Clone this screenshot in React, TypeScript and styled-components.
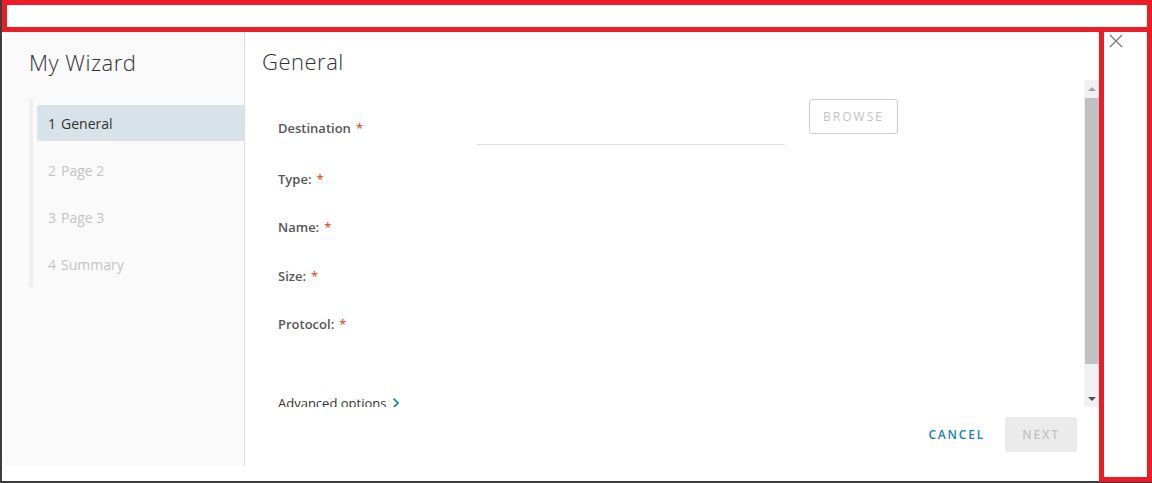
import styled, { createGlobalStyle } from 'styled-components'

const GlobalStyle = createGlobalStyle`
  html, body {
    margin: 0;
    padding: 0;
    background: #3d3d3d;
    font-family: 'Open Sans', 'Liberation Sans', sans-serif;
  }
  * { box-sizing: border-box; }
`

const Stage = styled.div`
  position: relative;
  width: 1152px;
  height: 483px;
  overflow: hidden;
  background: #3d3d3d;
`

const Modal = styled.div`
  display: flex;
  margin-left: 2px;
  width: 1150px;
  height: 481px;
  padding-left: 3px;
  background: #fff;
`

const Sidebar = styled.aside`
  width: 240px;
  height: 466px;
  flex-shrink: 0;
  padding: 48px 0 0 24px;
  background: #fafafa;
  border-right: 1px solid #dddddd;
  border-bottom-left-radius: 4px;
`

const Title = styled.h1`
  margin: 0;
  font-size: 22px;
  line-height: 28px;
  font-weight: 300;
  letter-spacing: 0.5px;
  color: #313131;
`

const StepNav = styled.nav`
  display: flex;
  flex-direction: column;
  gap: 11px;
  margin-top: 23px;
  padding: 6px 0 5px 4px;
  border-left: 4px solid #eeeeee;
`

const StepItem = styled.div<{ $active?: boolean }>`
  display: flex;
  align-items: center;
  height: 36px;
  padding-left: 11px;
  border-radius: 3px 0 0 3px;
  font-size: 14px;
  color: ${({ $active }) => ($active ? '#313131' : '#c4c4c4')};
  background: ${({ $active }) => ($active ? '#d8e3e9' : 'transparent')};

  span { margin-right: 5px; }
`

const Main = styled.main`
  display: flex;
  flex-direction: column;
  width: 854px;
  flex-shrink: 0;
`

const PageTitle = styled.h2`
  margin: 0;
  padding: 47px 0 0 17px;
  height: 80px;
  font-size: 22px;
  line-height: 28px;
  font-weight: 300;
  letter-spacing: 0.5px;
  color: #313131;
`

const ScrollArea = styled.div`
  display: flex;
  height: 327px;
`

const ScrollContent = styled.div`
  flex: 1;
  overflow: hidden;
  padding: 19px 0 27px 33px;
`

const ScrollTrack = styled.div`
  display: flex;
  flex-direction: column;
  width: 15px;
  flex-shrink: 0;
  background: #f1f1f1;
`

const ScrollArrow = styled.div<{ $down?: boolean; $color: string }>`
  display: flex;
  align-items: center;
  justify-content: center;
  height: 17px;
  flex-shrink: 0;
  margin-top: ${({ $down }) => ($down ? 'auto' : '0')};

  &::before {
    content: '';
    border-left: 4px solid transparent;
    border-right: 4px solid transparent;
    ${({ $down, $color }) =>
      $down ? `border-top: 4px solid ${$color};` : `border-bottom: 4px solid ${$color};`}
  }
`

const ScrollThumb = styled.div`
  height: 266px;
  margin: 1px 0 0 1px;
  background: #c1c1c1;
`

const FieldRow = styled.div<{ $top?: number }>`
  display: flex;
  align-items: flex-start;
  margin-top: ${({ $top }) => $top ?? 0}px;
`

const Label = styled.label<{ $pad?: number }>`
  width: 199px;
  flex-shrink: 0;
  padding-top: ${({ $pad }) => $pad ?? 0}px;
  font-size: 13px;
  line-height: 18px;
  font-weight: 600;
  color: #565656;
`

const Required = styled.span`
  margin-left: 5px;
  color: #e05a3c;
`

const TextInput = styled.input`
  width: 308px;
  height: 26px;
  margin-top: 20px;
  padding: 0;
  border: none;
  border-bottom: 1px solid #dddddd;
  outline: none;
  background: transparent;
  font-family: inherit;
  font-size: 13px;
`

const OutlineButton = styled.button`
  width: 89px;
  height: 35px;
  margin-left: 24px;
  border: 1px solid #cccccc;
  border-radius: 3px;
  background: #fff;
  color: #c2c2c2;
  font-family: inherit;
  font-size: 12px;
  letter-spacing: 2px;
  font-weight: 500;
`

const AdvancedLink = styled.div`
  display: flex;
  align-items: center;
  gap: 6px;
  font-size: 13px;
  line-height: 18px;
  color: #313131;
`

const Footer = styled.footer`
  display: flex;
  justify-content: flex-end;
  align-items: center;
  gap: 8px;
  padding: 10px 22px 0 0;
`

const FlatButton = styled.button`
  height: 35px;
  padding: 0 12px;
  border: none;
  background: transparent;
  color: #1a7fb8;
  font-family: inherit;
  font-size: 12px;
  font-weight: 600;
  letter-spacing: 1.8px;
`

const DisabledButton = styled.button`
  width: 72px;
  height: 35px;
  border: none;
  border-radius: 3px;
  background: #ebebeb;
  color: #c2c2c2;
  font-family: inherit;
  font-size: 12px;
  font-weight: 600;
  letter-spacing: 1.8px;
`

const CloseColumn = styled.div`
  padding: 34px 0 0 10px;
`

const CloseButton = styled.button`
  display: flex;
  padding: 0;
  border: none;
  background: transparent;
`

const Marker = styled.div<{ $fill?: boolean }>`
  position: absolute;
  border: 5px solid #ed1c24;
  background: ${({ $fill }) => ($fill ? '#fff' : 'transparent')};
  pointer-events: none;
`

const steps = ['General', 'Page 2', 'Page 3', 'Summary']

const fields = [
  { label: 'Type:', top: 25 },
  { label: 'Name:', top: 30 },
  { label: 'Size:', top: 31 },
  { label: 'Protocol:', top: 30 },
]

export default function App() {
  return (
    <>
      <GlobalStyle />
      <Stage>
        <Modal>
          <Sidebar>
            <Title>My Wizard</Title>
            <StepNav>
              {steps.map((step, i) => (
                <StepItem key={step} $active={i === 0}>
                  <span>{i + 1}</span>
                  {step}
                </StepItem>
              ))}
            </StepNav>
          </Sidebar>

          <Main>
            <PageTitle>General</PageTitle>
            <ScrollArea>
              <ScrollContent>
                <FieldRow>
                  <Label $pad={20}>
                    Destination<Required>*</Required>
                  </Label>
                  <TextInput />
                  <OutlineButton>BROWSE</OutlineButton>
                </FieldRow>
                {fields.map((f) => (
                  <FieldRow key={f.label} $top={f.top}>
                    <Label>
                      {f.label}
                      <Required>*</Required>
                    </Label>
                  </FieldRow>
                ))}
                <FieldRow $top={61}>
                  <AdvancedLink>
                    Advanced options
                    <svg width="8" height="12" viewBox="0 0 8 12">
                      <path d="M1.5 1.5 L6 6 L1.5 10.5" fill="none" stroke="#0079b8" strokeWidth="1.6" />
                    </svg>
                  </AdvancedLink>
                </FieldRow>
              </ScrollContent>
              <ScrollTrack>
                <ScrollArrow $color="#a3a3a3" />
                <ScrollThumb />
                <ScrollArrow $down $color="#505050" />
              </ScrollTrack>
            </ScrollArea>
            <Footer>
              <FlatButton>CANCEL</FlatButton>
              <DisabledButton disabled>NEXT</DisabledButton>
            </Footer>
          </Main>

          <CloseColumn>
            <CloseButton aria-label="Close">
              <svg width="14" height="14" viewBox="0 0 14 14">
                <path d="M1 1 L13 13 M13 1 L1 13" stroke="#777" strokeWidth="1.2" />
              </svg>
            </CloseButton>
          </CloseColumn>
        </Modal>

        <Marker $fill style={{ left: 2, top: 0, width: 1150, height: 32 }} />
        <Marker style={{ left: 1099, top: 27, width: 53, height: 455 }} />
      </Stage>
    </>
  )
}
